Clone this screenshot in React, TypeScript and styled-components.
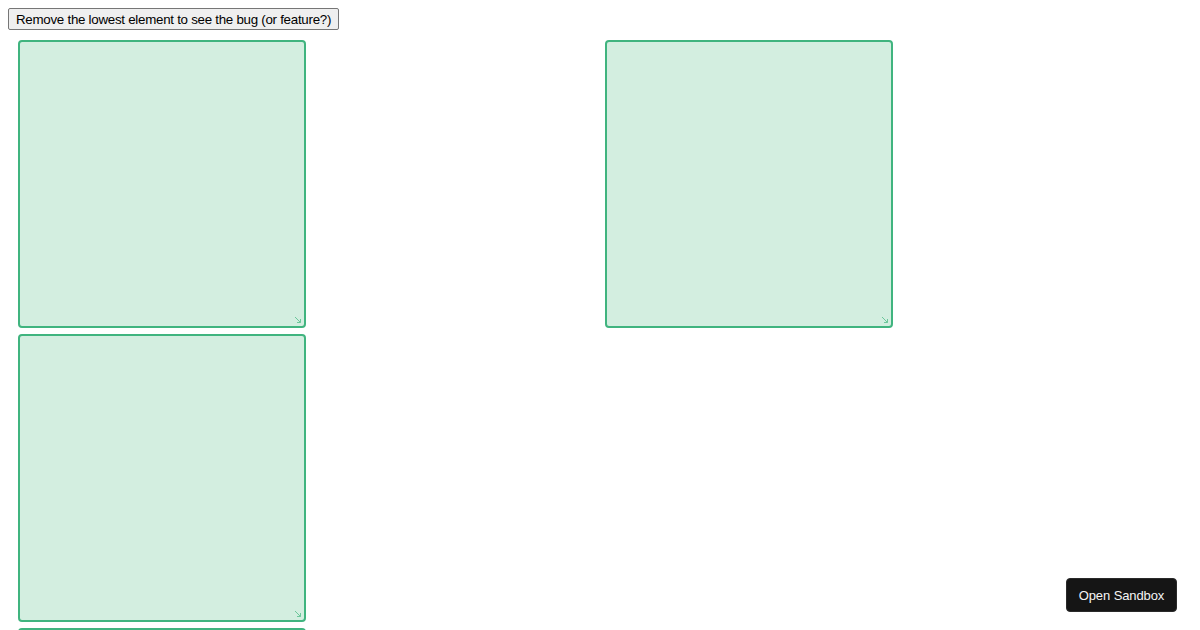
import React from "react";
import styled, { createGlobalStyle } from "styled-components";

const Global = createGlobalStyle`
  html, body { margin: 0; padding: 0; background: #fff; overflow: hidden; }
  body { margin: 8px; font-family: "Liberation Sans", Arial, sans-serif; }
`;

const RemoveButton = styled.button`
  display: block;
  height: 22px;
  padding: 1px 7px;
  font-family: "Liberation Sans", Arial, sans-serif;
  font-size: 13.333px;
  letter-spacing: -0.27px;
  color: #000;
  background: #efefef;
  border: 1px solid #767676;
  border-radius: 2px;
  cursor: pointer;
`;

const Grid = styled.div`
  display: grid;
  grid-template-columns: repeat(3, 288px);
  grid-auto-rows: 288px;
  column-gap: 5.5px;
  row-gap: 6px;
  padding: 10px 10px 0 10px;
`;

const Item = styled.div<{ $col: number; $row: number }>`
  position: relative;
  box-sizing: border-box;
  grid-column: ${(p) => p.$col};
  grid-row: ${(p) => p.$row};
  background: #d3eee0;
  border: 2px solid #40b47f;
  border-radius: 4px;
`;

const Handle = styled.svg`
  position: absolute;
  right: 2px;
  bottom: 2px;
  width: 8px;
  height: 8px;
`;

const SandboxButton = styled.button`
  position: fixed;
  right: 23px;
  bottom: 18px;
  box-sizing: border-box;
  width: 111px;
  height: 34px;
  padding: 0;
  background: #151515;
  color: #f4f4f4;
  border: 1px solid #2a2a2a;
  border-radius: 4px;
  font-family: "Liberation Sans", Arial, sans-serif;
  font-size: 13px;
  letter-spacing: -0.1px;
  cursor: pointer;
`;

const ResizeArrow = () => (
  <Handle viewBox="0 0 8 8">
    <path d="M1 1 L6.5 6.5 M6.5 3 L6.5 6.5 L3 6.5" stroke="#6cc79b" strokeWidth="1" fill="none" />
  </Handle>
);

const items = [
  { col: 1, row: 1 },
  { col: 3, row: 1 },
  { col: 1, row: 2 },
  { col: 1, row: 3 },
];

export default function App() {
  return (
    <>
      <Global />
      <RemoveButton>Remove the lowest element to see the bug (or feature?)</RemoveButton>
      <Grid>
        {items.map((it, i) => (
          <Item key={i} $col={it.col} $row={it.row}>
            <ResizeArrow />
          </Item>
        ))}
      </Grid>
      <SandboxButton>Open Sandbox</SandboxButton>
    </>
  );
}
